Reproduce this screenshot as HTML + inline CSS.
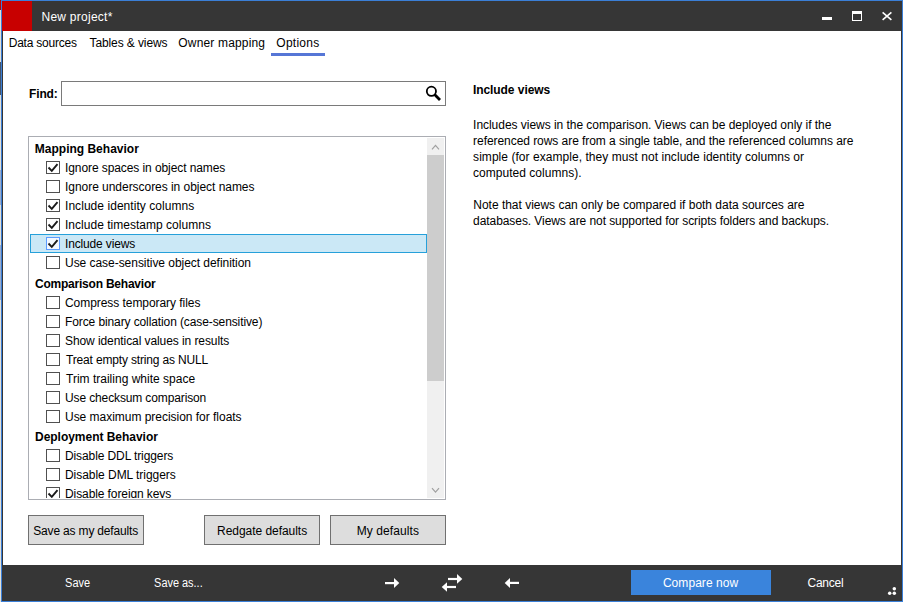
<!DOCTYPE html><html><head><meta charset='utf-8'><style>
*{margin:0;padding:0;box-sizing:border-box}
html,body{width:903px;height:602px;overflow:hidden;background:#fff}
body{position:relative;font-family:"Liberation Sans",sans-serif;font-size:12px;line-height:16px;color:#000}
.a{position:absolute}
.t{position:absolute;white-space:pre;font-size:12px;line-height:16px}
.b{font-weight:bold}
.cb{position:absolute;width:14px;height:13px;border:1px solid #505050;background:#fff}
.btn{position:absolute;background:#dddddd;border:1px solid #707070}
</style></head><body><div class='a' style='left:0;top:0;width:1px;height:602px;background:#e2e0d8'></div>
<div class='a' style='left:0;top:0;width:1px;height:10px;background:#c00000'></div>
<div class='a' style='left:0;top:62px;width:1px;height:33px;background:#44546a'></div>
<div class='a' style='left:0;top:170px;width:1px;height:35px;background:#9aaccc'></div>
<div class='a' style='left:0;top:245px;width:1px;height:55px;background:#9aaccc'></div>
<div class='a' style='left:1px;top:0;width:902px;height:602px;border:1px solid #3b7fd7'></div>
<div class='a' style='left:2px;top:1px;width:900px;height:600px;border-left:1px solid #363636;border-right:1px solid #363636'></div>
<div class='a' style='left:2px;top:1px;width:900px;height:30px;background:#363636'></div>
<div class='a' style='left:2px;top:1px;width:30px;height:30px;background:#c80000'></div>
<div class='a' style='left:2px;top:565px;width:900px;height:36px;background:#363636'></div>
<div class='a' style='left:631px;top:570px;width:140px;height:25px;background:#3a84dc'></div>
<div class='btn' style='left:330px;top:515px;width:116px;height:30px'></div>
<div class='btn' style='left:204px;top:515px;width:116px;height:30px'></div>
<div class='btn' style='left:28px;top:515px;width:116px;height:30px'></div>
<div class='a' style='left:822px;top:17px;width:10px;height:3px;background:#fff'></div>
<div class='a' style='left:852px;top:11px;width:10px;height:10px;border:1px solid #fff;border-top-width:3px'></div>
<svg class='a' style='left:880px;top:10px' width='14' height='12' viewBox='0 0 14 12'><path d='M2.6 2.4 L11.4 9.9 M11.4 2.4 L2.6 9.9' stroke='#fff' stroke-width='1.6' fill='none'/></svg>
<div class='a' style='left:271px;top:53px;width:54px;height:3px;background:#5676d6'></div>
<div class='a' style='left:61px;top:81px;width:385px;height:25px;border:1px solid #7a7a7a;background:#fff'></div>
<svg class='a' style='left:422px;top:83px' width='20' height='20' viewBox='0 0 20 20'><circle cx='9.4' cy='8.3' r='4.6' stroke='#000' stroke-width='1.8' fill='none'/><path d='M12.6 11.6 L18 17' stroke='#000' stroke-width='2.8' stroke-linecap='butt'/></svg>
<div class='a' style='left:28px;top:136px;width:418px;height:364px;border:1px solid #abadb3;background:#fff'></div>
<div class='a' style='left:30px;top:234px;width:397px;height:19px;border:1px solid #26a0da;background:#cbe8f6'></div>
<div class='a' style='left:427px;top:138px;width:17px;height:360px;background:#f0f0f0'></div>
<div class='a' style='left:427px;top:155px;width:17px;height:226px;background:#cdcdcd'></div>
<svg class='a' style='left:427px;top:138px' width='17' height='17' viewBox='0 0 17 17'><path d='M5 11.3 L8.5 7.3 L12 11.3' stroke='#a0a0a0' stroke-width='1.2' fill='none'/></svg>
<svg class='a' style='left:427px;top:481px' width='17' height='17' viewBox='0 0 17 17'><path d='M5 7.1 L8.5 11.1 L12 7.1' stroke='#a0a0a0' stroke-width='1.2' fill='none'/></svg>
<div class='t' style='left:41.5px;top:9px;letter-spacing:0.255px;color:#fff'>New project*</div>
<div class='t' style='left:8.7px;top:35px;letter-spacing:-0.209px;color:#000'>Data sources</div>
<div class='t' style='left:89.5px;top:35px;letter-spacing:-0.1px;color:#000'>Tables &amp; views</div>
<div class='t' style='left:178.3px;top:35px;letter-spacing:0.167px;color:#000'>Owner mapping</div>
<div class='t' style='left:276.3px;top:35px;letter-spacing:0.267px;color:#000'>Options</div>
<div class='t b' style='left:29.0px;top:86px;letter-spacing:-0.125px;color:#000'>Find:</div>
<div class='t' style='left:33.3px;top:523px;letter-spacing:-0.178px;color:#000'>Save as my defaults</div>
<div class='t' style='left:217.0px;top:523px;letter-spacing:-0.04px;color:#000'>Redgate defaults</div>
<div class='t' style='left:356.7px;top:523px;letter-spacing:0.1px;color:#000'>My defaults</div>
<div class='t b' style='left:472.9px;top:82px;letter-spacing:-0.058px;color:#000'>Include views</div>
<div class='t' style='left:473.1px;top:117px;letter-spacing:-0.036px;color:#000'>Includes views in the comparison. Views can be deployed only if the</div>
<div class='t' style='left:473.1px;top:133px;letter-spacing:-0.056px;color:#000'>referenced rows are from a single table, and the referenced columns are</div>
<div class='t' style='left:473.1px;top:149px;letter-spacing:0.046px;color:#000'>simple (for example, they must not include identity columns or</div>
<div class='t' style='left:473.1px;top:165px;letter-spacing:0.024px;color:#000'>computed columns).</div>
<div class='t' style='left:473.3px;top:197px;letter-spacing:-0.017px;color:#000'>Note that views can only be compared if both data sources are</div>
<div class='t' style='left:473.1px;top:213px;letter-spacing:-0.071px;color:#000'>databases. Views are not supported for scripts folders and backups.</div>
<div class='t' style='left:65.0px;top:575px;transform:scaleX(0.9157);transform-origin:1px 0;color:#fff'>Save</div>
<div class='t' style='left:153.5px;top:575px;transform:scaleX(0.9103);transform-origin:1px 0;color:#fff'>Save as...</div>
<div class='t' style='left:662.9px;top:575px;letter-spacing:0.06px;color:#fff'>Compare now</div>
<div class='t' style='left:807.6px;top:575px;letter-spacing:-0.28px;color:#fff'>Cancel</div>
<div class='a' style='left:29px;top:137px;width:398px;height:361px;overflow:hidden'><div class='a' style='left:-29px;top:-137px;width:903px;height:602px'><div class='cb' style='left:46px;top:161px'><svg class='a' style='left:0;top:0' width='12' height='11' viewBox='0 0 12 11'><path d='M1.5 5.5 L4.8 8.8 L10.5 2.2' stroke='#1a1a1a' stroke-width='1.9' fill='none'/></svg></div><div class='cb' style='left:46px;top:180px'></div><div class='cb' style='left:46px;top:199px'><svg class='a' style='left:0;top:0' width='12' height='11' viewBox='0 0 12 11'><path d='M1.5 5.5 L4.8 8.8 L10.5 2.2' stroke='#1a1a1a' stroke-width='1.9' fill='none'/></svg></div><div class='cb' style='left:46px;top:218px'><svg class='a' style='left:0;top:0' width='12' height='11' viewBox='0 0 12 11'><path d='M1.5 5.5 L4.8 8.8 L10.5 2.2' stroke='#1a1a1a' stroke-width='1.9' fill='none'/></svg></div><div class='cb' style='left:46px;top:237px;border-color:#5b9bff;background:#f3f8ff'><svg class='a' style='left:0;top:0' width='12' height='11' viewBox='0 0 12 11'><path d='M1.5 5.5 L4.8 8.8 L10.5 2.2' stroke='#1a1a1a' stroke-width='1.9' fill='none'/></svg></div><div class='cb' style='left:46px;top:256px'></div><div class='cb' style='left:46px;top:296px'></div><div class='cb' style='left:46px;top:315px'></div><div class='cb' style='left:46px;top:334px'></div><div class='cb' style='left:46px;top:353px'></div><div class='cb' style='left:46px;top:372px'></div><div class='cb' style='left:46px;top:391px'></div><div class='cb' style='left:46px;top:410px'></div><div class='cb' style='left:46px;top:449px'></div><div class='cb' style='left:46px;top:468px'></div><div class='cb' style='left:46px;top:487px'><svg class='a' style='left:0;top:0' width='12' height='11' viewBox='0 0 12 11'><path d='M1.5 5.5 L4.8 8.8 L10.5 2.2' stroke='#1a1a1a' stroke-width='1.9' fill='none'/></svg></div><div class='t b' style='left:34.8px;top:141px;letter-spacing:0.0px;color:#000'>Mapping Behavior</div><div class='t' style='left:65.0px;top:160px;letter-spacing:-0.086px;color:#000'>Ignore spaces in object names</div><div class='t' style='left:65.0px;top:179px;letter-spacing:-0.039px;color:#000'>Ignore underscores in object names</div><div class='t' style='left:65.0px;top:198px;letter-spacing:0.052px;color:#000'>Include identity columns</div><div class='t' style='left:65.0px;top:217px;letter-spacing:0.021px;color:#000'>Include timestamp columns</div><div class='t' style='left:65.0px;top:236px;letter-spacing:-0.15px;color:#000'>Include views</div><div class='t' style='left:65.0px;top:255px;letter-spacing:-0.04px;color:#000'>Use case-sensitive object definition</div><div class='t b' style='left:35.0px;top:276px;letter-spacing:-0.222px;color:#000'>Comparison Behavior</div><div class='t' style='left:65.0px;top:295px;letter-spacing:-0.057px;color:#000'>Compress temporary files</div><div class='t' style='left:65.0px;top:314px;letter-spacing:-0.105px;color:#000'>Force binary collation (case-sensitive)</div><div class='t' style='left:65.0px;top:333px;letter-spacing:-0.081px;color:#000'>Show identical values in results</div><div class='t' style='left:66.0px;top:352px;letter-spacing:-0.16px;color:#000'>Treat empty string as NULL</div><div class='t' style='left:66.0px;top:371px;letter-spacing:0.008px;color:#000'>Trim trailing white space</div><div class='t' style='left:65.0px;top:390px;letter-spacing:-0.127px;color:#000'>Use checksum comparison</div><div class='t' style='left:65.0px;top:409px;letter-spacing:-0.026px;color:#000'>Use maximum precision for floats</div><div class='t b' style='left:35.0px;top:429px;letter-spacing:-0.028px;color:#000'>Deployment Behavior</div><div class='t' style='left:65.0px;top:448px;letter-spacing:-0.105px;color:#000'>Disable DDL triggers</div><div class='t' style='left:65.0px;top:467px;letter-spacing:-0.042px;color:#000'>Disable DML triggers</div><div class='t' style='left:65.0px;top:486px;letter-spacing:-0.095px;color:#000'>Disable foreign keys</div></div></div>
<svg class='a' style='left:380px;top:570px' width='150' height='25' viewBox='0 0 150 25'>
<path d='M5 13.1 H15' stroke='#fff' stroke-width='2.2'/><path d='M14 8 L19.3 13 L14 18 Z' fill='#fff'/>
<path d='M68 9 H77.5' stroke='#fff' stroke-width='2.2'/><path d='M77 4.1 L82.3 8.9 L77 13.7 Z' fill='#fff'/>
<path d='M66.5 17 H76' stroke='#fff' stroke-width='2.2'/><path d='M67 12.2 L61.7 17 L67 21.8 Z' fill='#fff'/>
<path d='M129.5 12.9 H139' stroke='#fff' stroke-width='2.2'/><path d='M130 8 L124.7 12.9 L130 18 Z' fill='#fff'/>
</svg>
<svg class='a' style='left:885px;top:585px' width='14' height='12' viewBox='0 0 14 12'><circle cx='9.3' cy='3.8' r='1.75' fill='#fff'/><circle cx='4.7' cy='8.3' r='1.75' fill='#fff'/><circle cx='9.3' cy='8.3' r='1.75' fill='#fff'/></svg></body></html>
